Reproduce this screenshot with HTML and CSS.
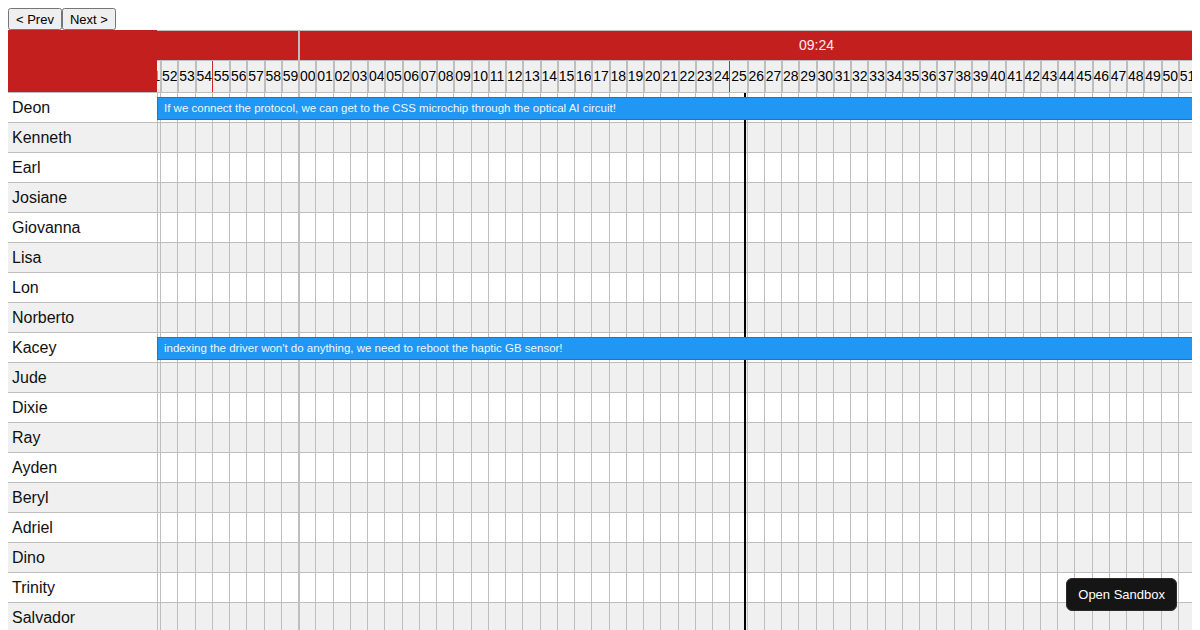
FILE: index.html
```html
<!DOCTYPE html>
<html lang="en">
<head>
    <meta charset="UTF-8">
    <meta name="viewport" content="width=device-width, initial-scale=1.0">
    <title>Scheduler</title>
    <link rel="stylesheet" href="styles.css">
</head>
<body>
    <div class="toolbar"><button id="prev">&lt; Prev</button><button id="next">Next &gt;</button></div>

    <div class="scheduler">
        <div class="resources" id="resources">
            <div class="resources-header"></div>
        </div>
        <div class="timeline">
            <div class="timeline-header">
                <div class="hour-row" id="hour-row"></div>
                <div class="minute-row" id="minute-row"></div>
            </div>
            <div class="timeline-body" id="timeline-body">
                <div class="now-line"></div>
            </div>
        </div>
    </div>

    <button class="sandbox-button">Open Sandbox</button>

    <script src="script.js"></script>
</body>
</html>
```

FILE: styles.css
```css
/* Base */
* {
    box-sizing: border-box;
}

body {
    margin: 8px;
    overflow: hidden;
    font-family: 'Liberation Sans', Arial, sans-serif;
    color: #111;
    background: #fff;
}

.toolbar {
    display: flex;
    height: 22px;
}

.toolbar button {
    font-family: 'Liberation Sans', Arial, sans-serif;
    font-size: 13px;
    margin: 0;
}

/* Scheduler layout */
.scheduler {
    display: flex;
    height: 600px;
    overflow: hidden;
}

.resources {
    width: 149px;
    flex: none;
}

.resources-header {
    height: 63px;
    background: #c41f1f;
    border-bottom: 1px solid #bebebe;
}

.resource {
    height: 30px;
    line-height: 29px;
    padding-left: 4px;
    font-size: 16px;
    border-bottom: 1px solid #bebebe;
    background: #fff;
}

.resource.alt {
    background: #f0f0f0;
}

.timeline {
    flex: 1;
    min-width: 0;
    overflow: hidden;
}

/* Header */
.timeline-header {
    border-left: 1px solid #bebebe;
}

.hour-row {
    display: flex;
    height: 31px;
    margin-left: -895px;
    border-top: 1px solid #bebebe;
    border-bottom: 1px solid #bebebe;
}

.hour {
    flex: none;
    width: 1035px;
    background: #c41f1f;
    border-left: 2px solid #bebebe;
    color: #fbeeee;
    font-size: 14px;
    line-height: 29px;
    text-align: center;
}

.minute-row {
    display: flex;
    height: 32px;
    margin-left: -895px;
    border-bottom: 1px solid #bebebe;
}

.minute {
    flex: none;
    width: 17.25px;
    background: #f0f0f0;
    border-left: 2px solid #bebebe;
    font-size: 14px;
    line-height: 31px;
    white-space: nowrap;
    overflow: hidden;
    color: #000;
}

.minute.mark {
    border-left: 1px solid #d3262a;
    padding-left: 1px;
}

/* Body */
.timeline-body {
    position: relative;
}

.row {
    position: relative;
    height: 30px;
    border-left: 1px solid #bebebe;
    border-bottom: 1px solid #bebebe;
    background: #fff;
}

.row.alt {
    background: #f0f0f0;
}

.row-track {
    display: flex;
    height: 100%;
    margin-left: -895px;
}

.cell {
    flex: none;
    width: 17.25px;
    border-left: 1px solid #bebebe;
}

.cell.hour-start {
    border-left-width: 2px;
}

.event {
    position: absolute;
    left: -1px;
    right: -60px;
    top: 4px;
    height: 23px;
    padding-left: 6px;
    background: #2196f3;
    border: 1px solid #1a78c9;
    color: #eef6fe;
    font-size: 11.5px;
    line-height: 21px;
    white-space: nowrap;
    overflow: hidden;
    z-index: 2;
}

.now-line {
    position: absolute;
    top: 0;
    bottom: 0;
    left: 587px;
    width: 2px;
    background: #000;
    z-index: 1;
}

/* Floating sandbox button */
.sandbox-button {
    position: fixed;
    right: 23px;
    bottom: 19px;
    height: 33px;
    padding: 0 11px;
    background: #151515;
    color: #fff;
    border: 1px solid #2b2b2b;
    border-radius: 6px;
    font-family: 'Liberation Sans', Arial, sans-serif;
    font-size: 13px;
}
```

FILE: script.js
```js
const resources = [
    'Deon', 'Kenneth', 'Earl', 'Josiane', 'Giovanna', 'Lisa', 'Lon', 'Norberto', 'Kacey',
    'Jude', 'Dixie', 'Ray', 'Ayden', 'Beryl', 'Adriel', 'Dino', 'Trinity', 'Salvador'
];

const events = [
    { resource: 'Deon', text: 'If we connect the protocol, we can get to the CSS microchip through the optical AI circuit!' },
    { resource: 'Kacey', text: "indexing the driver won't do anything, we need to reboot the haptic GB sensor!" }
];

const hours = [8, 9];
const marks = ['8:55', '9:25'];

function pad(n) {
    return String(n).padStart(2, '0');
}

function el(cls, text) {
    const div = document.createElement('div');
    div.className = cls;
    if (text) div.textContent = text;
    return div;
}

// Header
const hourRow = document.getElementById('hour-row');
const minuteRow = document.getElementById('minute-row');

hours.forEach(function(h) {
    hourRow.appendChild(el('hour', pad(h) + ':24'));
    for (let m = 0; m < 60; m++) {
        const cls = marks.includes(h + ':' + m) ? 'minute mark' : 'minute';
        minuteRow.appendChild(el(cls, pad(m)));
    }
});

// Resource names and grid rows
const resourceList = document.getElementById('resources');
const body = document.getElementById('timeline-body');
const nowLine = body.querySelector('.now-line');

resources.forEach(function(name, i) {
    const alt = i % 2 === 1 ? ' alt' : '';
    resourceList.appendChild(el('resource' + alt, name));

    const row = el('row' + alt);
    const track = el('row-track');
    hours.forEach(function() {
        for (let m = 0; m < 60; m++) {
            track.appendChild(el(m === 0 ? 'cell hour-start' : 'cell'));
        }
    });
    row.appendChild(track);

    events.filter(function(e) { return e.resource === name; }).forEach(function(e) {
        row.appendChild(el('event', e.text));
    });

    body.insertBefore(row, nowLine);
});
```
